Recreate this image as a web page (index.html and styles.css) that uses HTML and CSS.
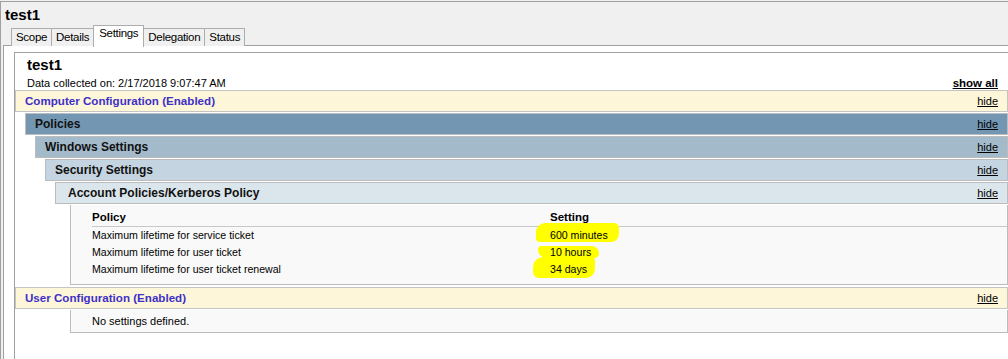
FILE: index.html
```html
<!DOCTYPE html>
<html lang="en">
<head>
    <meta charset="UTF-8">
    <title>test1</title>
    <link rel="stylesheet" href="styles.css">
</head>
<body>
    <div class="window">
        <div class="title">test1</div>

        <div class="tabs">
            <div class="tab">Scope</div>
            <div class="tab">Details</div>
            <div class="tab active">Settings</div>
            <div class="tab">Delegation</div>
            <div class="tab">Status</div>
        </div>

        <div class="panel">
            <div class="doc">
                <div class="doc-title">test1</div>
                <div class="doc-info">
                    <span>Data collected on: 2/17/2018 9:07:47 AM</span>
                    <a class="show-all">show all</a>
                </div>

                <!-- Configuration ordinateur -->
                <div class="bar bar-cat">
                    <span>Computer Configuration (Enabled)</span>
                    <a class="hide">hide</a>
                </div>
                <div class="sub">
                    <div class="bar lvl1"><span>Policies</span><a class="hide">hide</a></div>
                    <div class="sub">
                        <div class="bar lvl2"><span>Windows Settings</span><a class="hide">hide</a></div>
                        <div class="sub">
                            <div class="bar lvl3"><span>Security Settings</span><a class="hide">hide</a></div>
                            <div class="sub">
                                <div class="bar lvl4"><span>Account Policies/Kerberos Policy</span><a class="hide">hide</a></div>
                                <div class="info">
                                    <table>
                                        <tr>
                                            <th class="col-policy">Policy</th>
                                            <th>Setting</th>
                                        </tr>
                                        <tr>
                                            <td>Maximum lifetime for service ticket</td>
                                            <td><span class="hl hl1">600 minutes</span></td>
                                        </tr>
                                        <tr>
                                            <td>Maximum lifetime for user ticket</td>
                                            <td><span class="hl hl2">10 hours</span></td>
                                        </tr>
                                        <tr>
                                            <td>Maximum lifetime for user ticket renewal</td>
                                            <td><span class="hl hl3">34 days</span></td>
                                        </tr>
                                    </table>
                                </div>
                            </div>
                        </div>
                    </div>
                </div>

                <!-- Configuration utilisateur -->
                <div class="bar bar-cat bar-user">
                    <span>User Configuration (Enabled)</span>
                    <a class="hide">hide</a>
                </div>
                <div class="empty">No settings defined.</div>
            </div>
        </div>
    </div>
</body>
</html>
```

FILE: styles.css
```css
body {
    margin: 0;
    height: 359px;
    overflow: hidden;
    background-color: #f0f0f0;
    font-family: "Liberation Sans", Arial, sans-serif;
    font-size: 11px;
    color: #000;
}

.window {
    margin-top: 1px;
    height: 358px;
    border-top: 1px solid #a0a0a0;
    border-left: 1px solid #a0a0a0;
}

.title {
    padding: 4px 0 0 4px;
    font-size: 15px;
    font-weight: bold;
    line-height: 18px;
}

.tabs {
    display: flex;
    height: 21px;
    margin-top: 1px;
    margin-bottom: -1px;
    padding-left: 10px;
}

.tab {
    align-self: flex-start;
    height: 17px;
    margin-top: 3px;
    padding: 0 4px;
    border: 1px solid #adadad;
    border-bottom: none;
    border-right: none;
    background-color: #f0f0f0;
    line-height: 17px;
    font-size: 11.5px;
    letter-spacing: -0.3px;
}

.tab:last-child {
    border-right: 1px solid #adadad;
}

.tab.active {
    position: relative;
    z-index: 1;
    height: 21px;
    margin-top: 0;
    padding: 0 5px;
    border-right: 1px solid #adadad;
    background-color: #fff;
    line-height: 15px;
}

.tab.active + .tab {
    border-left: none;
}

.panel {
    margin-left: 2px;
    height: 320px;
    padding: 6px 0 0 10px;
    border-top: 1px solid #a0a0a0;
    border-left: 1px solid #a0a0a0;
    background-color: #fff;
}

.doc {
    width: 993px;
    height: 320px;
    padding-top: 3px;
    border-top: 1px solid #a0a0a0;
    border-left: 1px solid #a0a0a0;
    background-color: #fff;
}

.doc-title {
    padding-left: 12px;
    font-size: 15px;
    font-weight: bold;
    line-height: 18px;
}

.doc-info {
    display: flex;
    justify-content: space-between;
    margin-top: 2px;
    padding: 0 10px 0 12px;
    line-height: 14px;
}

.show-all {
    font-weight: bold;
    font-size: 11.5px;
    text-decoration: underline;
}

.bar {
    display: flex;
    justify-content: space-between;
    height: 20px;
    margin-bottom: 1px;
    padding: 0 9px 0 9px;
    border: 1px solid #bcbcbc;
    line-height: 20px;
    font-size: 12px;
    font-weight: bold;
    color: #111;
}

.bar .hide {
    font-size: 11px;
    font-weight: normal;
    color: #000;
    text-decoration: underline;
}

.bar-cat {
    background-color: #fdf6d8;
    color: #3d30c8;
    font-size: 11.6px;
    border-color: #c4c4c4;
}

.bar-cat.bar-user {
    margin-top: 2px;
}

.lvl1 { background-color: #7397b3; }
.lvl2 { background-color: #a3bacb; }
.lvl3 { background-color: #c4d4e0; }
.lvl4 {
    background-color: #dbe5ec;
    padding-left: 12px;
}

.sub {
    margin-left: 10px;
}

.info {
    margin-left: 15px;
    padding: 4px 0 6px 21px;
    border: 1px solid #bcbcbc;
    border-top: none;
    background-color: #f9f9f9;
}

table {
    width: 100%;
    border-collapse: collapse;
}

th, td {
    padding: 0;
    text-align: left;
    line-height: 17px;
}

th {
    font-size: 11.5px;
    font-weight: bold;
    border-bottom: 1px solid #c8c8c8;
}

.col-policy {
    width: 458px;
}

td {
    font-size: 10.6px;
}

/* surlignage jaune */
.hl {
    background-color: #ffff00;
}

.hl1 {
    padding: 6px 11px 1px 14px;
    margin: 0 -11px 0 -14px;
    border-radius: 9px 5px 8px 4px;
}

.hl2 {
    padding: 0 8px 0 12px;
    margin: 0 -8px 0 -12px;
    border-radius: 4px 8px 5px 9px;
}

.hl3 {
    padding: 6px 8px 3px 17px;
    margin: 0 -8px 0 -17px;
    border-radius: 10px 4px 9px 6px;
}

.empty {
    margin-left: 55px;
    height: 22px;
    padding-left: 21px;
    border: 1px solid #bcbcbc;
    border-top: none;
    background-color: #f9f9f9;
    line-height: 23px;
}
```
